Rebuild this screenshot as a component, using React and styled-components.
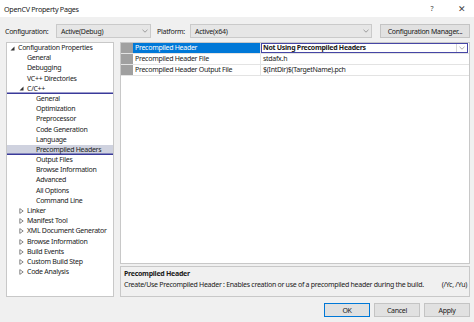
import React from "react";
import styled, { createGlobalStyle } from "styled-components";

const FONT = `"Segoe UI", "Noto Sans", "Open Sans", sans-serif`;

const GlobalStyle = createGlobalStyle`
  html, body { margin: 0; padding: 0; }
  body {
    background: #f0f0f0;
    font-family: ${FONT};
    font-size: 7px;
    letter-spacing: -0.28px;
    color: #1a1a1a;
  }
`;

const Window = styled.div`
  width: 474px;
  height: 322px;
  display: flex;
  flex-direction: column;
  background: #f0f0f0;
  overflow: hidden;
`;

const TitleBar = styled.div`
  height: 17px;
  background: #ffffff;
  display: flex;
  align-items: center;
  padding: 0 0 0 4px;
  font-size: 7.2px;
`;

const Title = styled.span`
  flex: 1;
`;

const TitleBtn = styled.span`
  width: ${(p) => p.$w}px;
  text-align: center;
  font-size: ${(p) => p.$size || 8}px;
  color: #444;
`;

const ConfigRow = styled.div`
  display: flex;
  align-items: center;
  padding: 7px 0 3px 5px;
  height: 14px;
`;

const Label = styled.span`
  width: ${(p) => p.$w}px;
  white-space: nowrap;
`;

const Combo = styled.div`
  width: ${(p) => p.$w}px;
  height: 14px;
  box-sizing: border-box;
  border: 1px solid #cacaca;
  background: #e6e6e6;
  display: flex;
  align-items: center;
  padding-left: 4px;
  margin-right: ${(p) => p.$mr}px;
  color: #222;
`;

const ComboText = styled.span`
  flex: 1;
`;

const ComboArrow = styled.span`
  width: 10px;
  display: flex;
  justify-content: center;
  color: #888;
`;

const Button = styled.button`
  box-sizing: border-box;
  height: ${(p) => p.$h || 14}px;
  width: ${(p) => p.$w}px;
  border: 1px solid ${(p) => (p.$default ? "#0078d7" : "#c4c4c4")};
  background: #e1e1e1;
  font-family: ${FONT};
  font-size: 7px;
  letter-spacing: -0.28px;
  color: #1a1a1a;
  padding: 0;
  margin: 0;
`;

const Main = styled.div`
  display: flex;
  padding: 1px 4px 0 6px;
  gap: 6px;
  height: 255px;
`;

const Tree = styled.div`
  width: 108px;
  flex-shrink: 0;
  box-sizing: border-box;
  border: 1px solid #c8c8c8;
  background: #ffffff;
`;

const TreeRow = styled.div`
  height: 10.2px;
  line-height: 10.2px;
  display: flex;
  align-items: center;
  padding-left: ${(p) => p.$indent}px;
  background: ${(p) => (p.$selected ? "#cfd2df" : "transparent")};
  box-shadow: ${(p) => (p.$underline ? "inset 0 -1.5px 0 #3a3a9a" : "none")};
  white-space: nowrap;
  color: #222;
`;

const Expander = styled.span`
  width: 8px;
  display: inline-flex;
  align-items: center;
`;

const RightCol = styled.div`
  flex: 1;
  min-width: 0;
  display: flex;
  flex-direction: column;
  gap: 2px;
`;

const Grid = styled.div`
  flex: 1;
  background: #ffffff;
  border: 1px solid #c8c8c8;
  display: flex;
  flex-direction: column;
`;

const GridRow = styled.div`
  display: grid;
  grid-template-columns: 12px 128px 1fr;
  height: 10px;
  line-height: 10px;
  border-bottom: 1px solid #e3e3e3;
`;

const Gutter = styled.div`
  background: #a0a0a0;
`;

const NameCell = styled.div`
  padding-left: 2px;
  background: ${(p) => (p.$selected ? "#0078d7" : "#fff")};
  color: ${(p) => (p.$selected ? "#fff" : "#222")};
  border-right: 1px solid #e3e3e3;
  white-space: nowrap;
  overflow: hidden;
`;

const ValueCell = styled.div`
  position: relative;
  padding-left: 2px;
  font-weight: ${(p) => (p.$focused ? 700 : 400)};
  box-shadow: ${(p) => (p.$focused ? "inset 0 0 0 1px #4646a6" : "none")};
  display: flex;
  align-items: center;
  white-space: nowrap;
  margin-right: 1px;
  min-width: 0;
`;

const DropBox = styled.span`
  position: absolute;
  right: 2px;
  top: 1px;
  width: 9px;
  height: 8px;
  border-left: 1px solid #d6d6d6;
  display: flex;
  align-items: center;
  justify-content: center;
`;

const Description = styled.div`
  height: 31px;
  box-sizing: border-box;
  border: 1px solid #c8c8c8;
  background: #f0f0f0;
  padding: 2px 2px 2px 3px;
  display: flex;
  flex-direction: column;
  gap: 1px;
`;

const DescTitle = styled.div`
  font-weight: 700;
  line-height: 10px;
`;

const DescLine = styled.div`
  display: flex;
  justify-content: space-between;
  line-height: 10px;
  white-space: nowrap;
`;

const ButtonRow = styled.div`
  display: flex;
  justify-content: flex-end;
  gap: 4px;
  padding: 6px 4px 0 0;
`;

const Chevron = ({ color = "#888" }) => (
  <svg width="6" height="4" viewBox="0 0 6 4">
    <path d="M0.5 0.8 L3 3.2 L5.5 0.8" fill="none" stroke={color} strokeWidth="0.8" />
  </svg>
);

const Arrow = ({ open }) =>
  open ? (
    <svg width="5" height="5" viewBox="0 0 5 5">
      <path d="M4.5 0.5 L4.5 4.5 L0.5 4.5 Z" fill="#333" />
    </svg>
  ) : (
    <svg width="5" height="6" viewBox="0 0 5 6">
      <path d="M0.8 0.6 L4.2 3 L0.8 5.4 Z" fill="none" stroke="#555" strokeWidth="0.7" />
    </svg>
  );

const tree = [
  { t: "Configuration Properties", i: 3, arrow: "open" },
  { t: "General", i: 20 },
  { t: "Debugging", i: 20 },
  { t: "VC++ Directories", i: 20 },
  { t: "C/C++", i: 12, arrow: "open", underline: true },
  { t: "General", i: 29 },
  { t: "Optimization", i: 29 },
  { t: "Preprocessor", i: 29 },
  { t: "Code Generation", i: 29 },
  { t: "Language", i: 29 },
  { t: "Precompiled Headers", i: 29, selected: true, underline: true },
  { t: "Output Files", i: 29 },
  { t: "Browse Information", i: 29 },
  { t: "Advanced", i: 29 },
  { t: "All Options", i: 29 },
  { t: "Command Line", i: 29 },
  { t: "Linker", i: 12, arrow: "closed" },
  { t: "Manifest Tool", i: 12, arrow: "closed" },
  { t: "XML Document Generator", i: 12, arrow: "closed" },
  { t: "Browse Information", i: 12, arrow: "closed" },
  { t: "Build Events", i: 12, arrow: "closed" },
  { t: "Custom Build Step", i: 12, arrow: "closed" },
  { t: "Code Analysis", i: 12, arrow: "closed" },
];

const rows = [
  { n: "Precompiled Header", v: "Not Using Precompiled Headers", sel: true },
  { n: "Precompiled Header File", v: "stdafx.h" },
  { n: "Precompiled Header Output File", v: "$(IntDir)$(TargetName).pch" },
];

export default function App() {
  return (
    <Window>
      <GlobalStyle />
      <TitleBar>
        <Title>OpenCV Property Pages</Title>
        <TitleBtn $w={36} $size={7}>?</TitleBtn>
        <TitleBtn $w={24} $size={9}>✕</TitleBtn>
      </TitleBar>
      <ConfigRow>
        <Label $w={51}>Configuration:</Label>
        <Combo $w={95} $mr={6}>
          <ComboText>Active(Debug)</ComboText>
          <ComboArrow><Chevron /></ComboArrow>
        </Combo>
        <Label $w={33}>Platform:</Label>
        <Combo $w={182} $mr={8}>
          <ComboText>Active(x64)</ComboText>
          <ComboArrow><Chevron /></ComboArrow>
        </Combo>
        <Button $w={90}>Configuration Manager...</Button>
      </ConfigRow>
      <Main>
        <Tree>
          {tree.map((r, k) => (
            <TreeRow key={k} $indent={r.i} $selected={r.selected} $underline={r.underline}>
              {r.arrow && (
                <Expander>
                  <Arrow open={r.arrow === "open"} />
                </Expander>
              )}
              {r.t}
            </TreeRow>
          ))}
        </Tree>
        <RightCol>
          <Grid>
            {rows.map((r, k) => (
              <GridRow key={k}>
                <Gutter />
                <NameCell $selected={r.sel}>{r.n}</NameCell>
                <ValueCell $focused={r.sel}>
                  {r.v}
                  {r.sel && (
                    <DropBox>
                      <Chevron color="#999" />
                    </DropBox>
                  )}
                </ValueCell>
              </GridRow>
            ))}
          </Grid>
          <Description>
            <DescTitle>Precompiled Header</DescTitle>
            <DescLine>
              <span>Create/Use Precompiled Header : Enables creation or use of a precompiled header during the build.</span>
              <span>(/Yc, /Yu)</span>
            </DescLine>
          </Description>
        </RightCol>
      </Main>
      <ButtonRow>
        <Button $w={46} $default>OK</Button>
        <Button $w={46}>Cancel</Button>
        <Button $w={46}>Apply</Button>
      </ButtonRow>
    </Window>
  );
}
